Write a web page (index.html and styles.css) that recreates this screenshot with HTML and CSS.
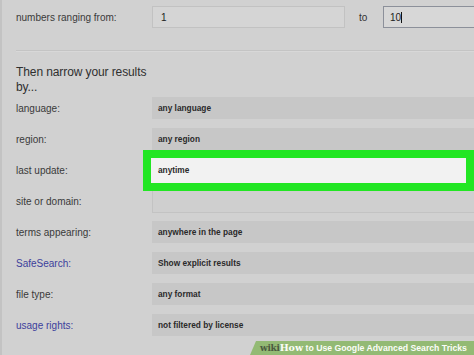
FILE: index.html
```html
<!DOCTYPE html>
<html>
<head>
<meta charset="utf-8">
<link rel="stylesheet" href="styles.css">
</head>
<body>
<div class="page">
  <div class="range-row">
    <div class="label">numbers ranging from:</div>
    <div class="input input-from">1</div>
    <div class="to">to</div>
    <div class="input input-to">10<span class="caret"></span></div>
  </div>
  <div class="separator"></div>
  <h2 class="heading">Then narrow your results<br>by...</h2>
  <div class="rows">
    <div class="row"><div class="label">language:</div><div class="select">any language</div></div>
    <div class="row"><div class="label">region:</div><div class="select">any region</div></div>
    <div class="row"><div class="label">last update:</div><div class="select highlighted">anytime</div></div>
    <div class="row"><div class="label">site or domain:</div><div class="field-empty"></div></div>
    <div class="row"><div class="label">terms appearing:</div><div class="select">anywhere in the page</div></div>
    <div class="row"><div class="label link">SafeSearch:</div><div class="select">Show explicit results</div></div>
    <div class="row"><div class="label">file type:</div><div class="select">any format</div></div>
    <div class="row"><div class="label link">usage rights:</div><div class="select">not filtered by license</div></div>
  </div>
</div>
<div class="banner"><span class="wiki">wiki</span><span class="how">How</span> to Use Google Advanced Search Tricks</div>
</body>
</html>
```

FILE: styles.css
```css
html, body {
  margin: 0;
  padding: 0;
  width: 474px;
  height: 355px;
  overflow: hidden;
  background: #d1d1d1;
  font-family: "Liberation Sans", Arial, sans-serif;
}
body {
  position: relative;
  border-left: 2px solid #c3c3c3;
  box-sizing: border-box;
}
.page {
  padding: 6px 0 0 14px;
}
.range-row {
  display: flex;
  align-items: center;
  height: 22px;
  white-space: nowrap;
}
.label {
  width: 136px;
  flex: none;
  font-size: 10px;
  color: #3a3a3a;
}
.label.link {
  color: #3c409c;
}
.input {
  box-sizing: border-box;
  height: 22px;
  background: #d5d5d5;
  border: 1px solid #c2c2c2;
  font-size: 10px;
  color: #222;
  display: flex;
  align-items: center;
  padding-left: 8px;
}
.input-from {
  width: 193px;
  flex: none;
}
.to {
  width: 38px;
  flex: none;
  font-size: 10px;
  color: #333;
  padding-left: 14px;
  box-sizing: border-box;
}
.input-to {
  flex: 1;
  min-width: 0;
  border: 1px solid #8c909a;
  border-right: none;
  background: #d7d7d7;
  padding-left: 6px;
}
.caret {
  display: inline-block;
  width: 0;
  height: 11px;
  border-left: 1px solid #111;
}
.separator {
  margin-top: 22px;
  height: 1px;
  background: #c4c4c4;
  border-bottom: 1px solid #d8d8d8;
}
.heading {
  margin: 13px 0 0 0;
  font-weight: normal;
  font-size: 12px;
  letter-spacing: -0.1px;
  line-height: 15px;
  color: #2f2f2f;
}
.rows {
  margin-top: 2px;
  display: flex;
  flex-direction: column;
  gap: 9px;
}
.row {
  display: flex;
  align-items: center;
  height: 22px;
}
.select {
  flex: 1;
  height: 22px;
  background: #c7c7c7;
  display: flex;
  align-items: center;
  padding-left: 6px;
  font-size: 8.3px;
  font-weight: bold;
  color: #2a2a2a;
  white-space: nowrap;
}
.select.highlighted {
  background: #f2f2f2;
  height: 25px;
  margin-right: 8px;
  margin-left: -1px;
  padding-left: 7px;
  outline: 8px solid #22e623;
  position: relative;
  z-index: 1;
}
.field-empty {
  flex: 1;
  box-sizing: border-box;
  height: 23px;
  background: #cfcfcf;
  border: 1px solid #c3c3c3;
  border-right: none;
}
.banner {
  position: absolute;
  right: 0;
  bottom: 0;
  width: 224px;
  height: 14px;
  background: #93ba74;
  clip-path: polygon(6px 0, 100% 0, 100% 100%, 0 100%);
  color: #fbfdf8;
  font-size: 8.7px;
  font-weight: bold;
  line-height: 14px;
  padding-left: 10px;
  box-sizing: border-box;
  white-space: nowrap;
  overflow: hidden;
}
.banner .wiki {
  font-family: "DejaVu Serif", "Liberation Serif", serif;
  color: #4b5a40;
  font-weight: bold;
  font-size: 9px;
  letter-spacing: -0.3px;
}
.banner .how {
  font-family: "DejaVu Serif", "Liberation Serif", serif;
  font-weight: bold;
  font-size: 9.5px;
}
```
